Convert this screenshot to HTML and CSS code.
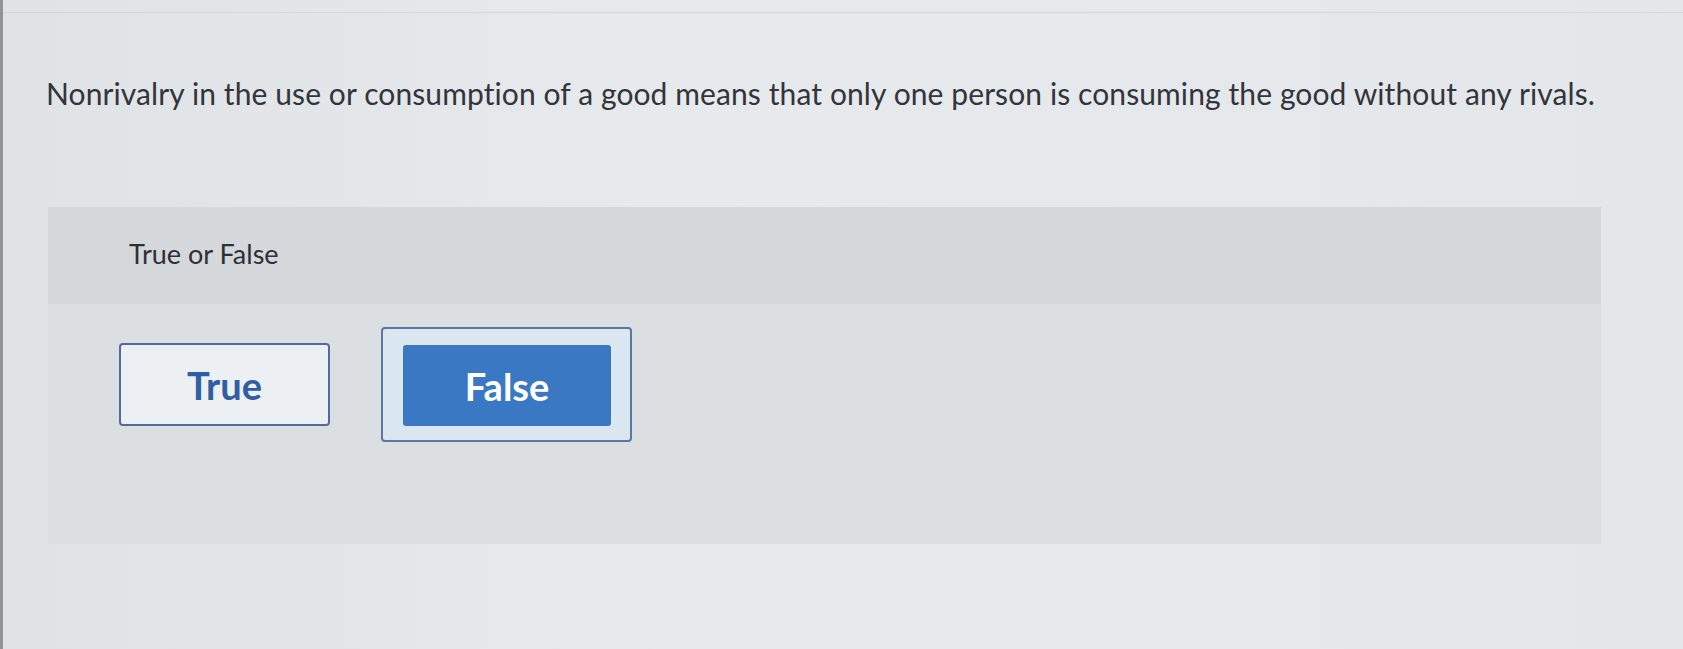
FILE: index.html
```html
<!DOCTYPE html>
<html lang="en">

<head>
  <meta charset="UTF-8" />
  <meta name="viewport" content="width=device-width, initial-scale=1" />
  <title>True or False</title>
  <link rel="stylesheet" href="styles.css">
</head>

<body>
  <div class="page">
    <p class="question">Nonrivalry in the use or consumption of a good means that only one person is consuming the good without any rivals.</p>

    <div class="answer-box">
      <div class="answer-head">True or False</div>
      <div class="choices">
        <button class="choice">True</button>
        <div class="choice-ring">
          <button class="choice selected">False</button>
        </div>
      </div>
    </div>
  </div>
</body>

</html>
```

FILE: styles.css
```css
* {
  box-sizing: border-box;
}

body {
  margin: 0;
  font-family: 'Lato', 'Open Sans', sans-serif;
  background: linear-gradient(90deg, #dfe3e6 0%, #e6eaec 40%, #e3e7ea 100%);
  color: #2c2d36;
  min-height: 649px;
}

.page {
  min-height: 649px;
  border-left: 3px solid #8f9499;
  padding-top: 12px;
}

.question {
  margin: 0;
  border-top: 1px solid #d3d7da;
  padding: 62px 0 0 43px;
  font-size: 30px;
  line-height: 36px;
  letter-spacing: 0.1px;
  color: #33343c;
}

.answer-box {
  margin: 96px 0 0 45px;
  width: 1553px;
  height: 337px;
  background: #dbdfe2;
}

.answer-head {
  height: 97px;
  padding: 30px 0 0 81px;
  background: #d4d8db;
  font-size: 27px;
  color: #2e2f38;
}

.choices {
  display: flex;
  align-items: center;
  gap: 51px;
  padding: 23px 0 0 71px;
}

.choice {
  width: 211px;
  height: 83px;
  border: 2px solid #4e6c9f;
  border-radius: 4px;
  background: #edf0f2;
  color: #2f5ea5;
  font-family: 'Lato', 'Open Sans', sans-serif;
  font-weight: bold;
  font-size: 38px;
  cursor: pointer;
}

.choice-ring {
  padding: 16px 19px 14px 20px;
  border: 2px solid #5a77a6;
  border-radius: 4px;
  background: #dbe7f0;
}

.choice.selected {
  width: 208px;
  height: 81px;
  border: none;
  border-radius: 3px;
  background: #3b78c3;
  color: #ffffff;
}
```
